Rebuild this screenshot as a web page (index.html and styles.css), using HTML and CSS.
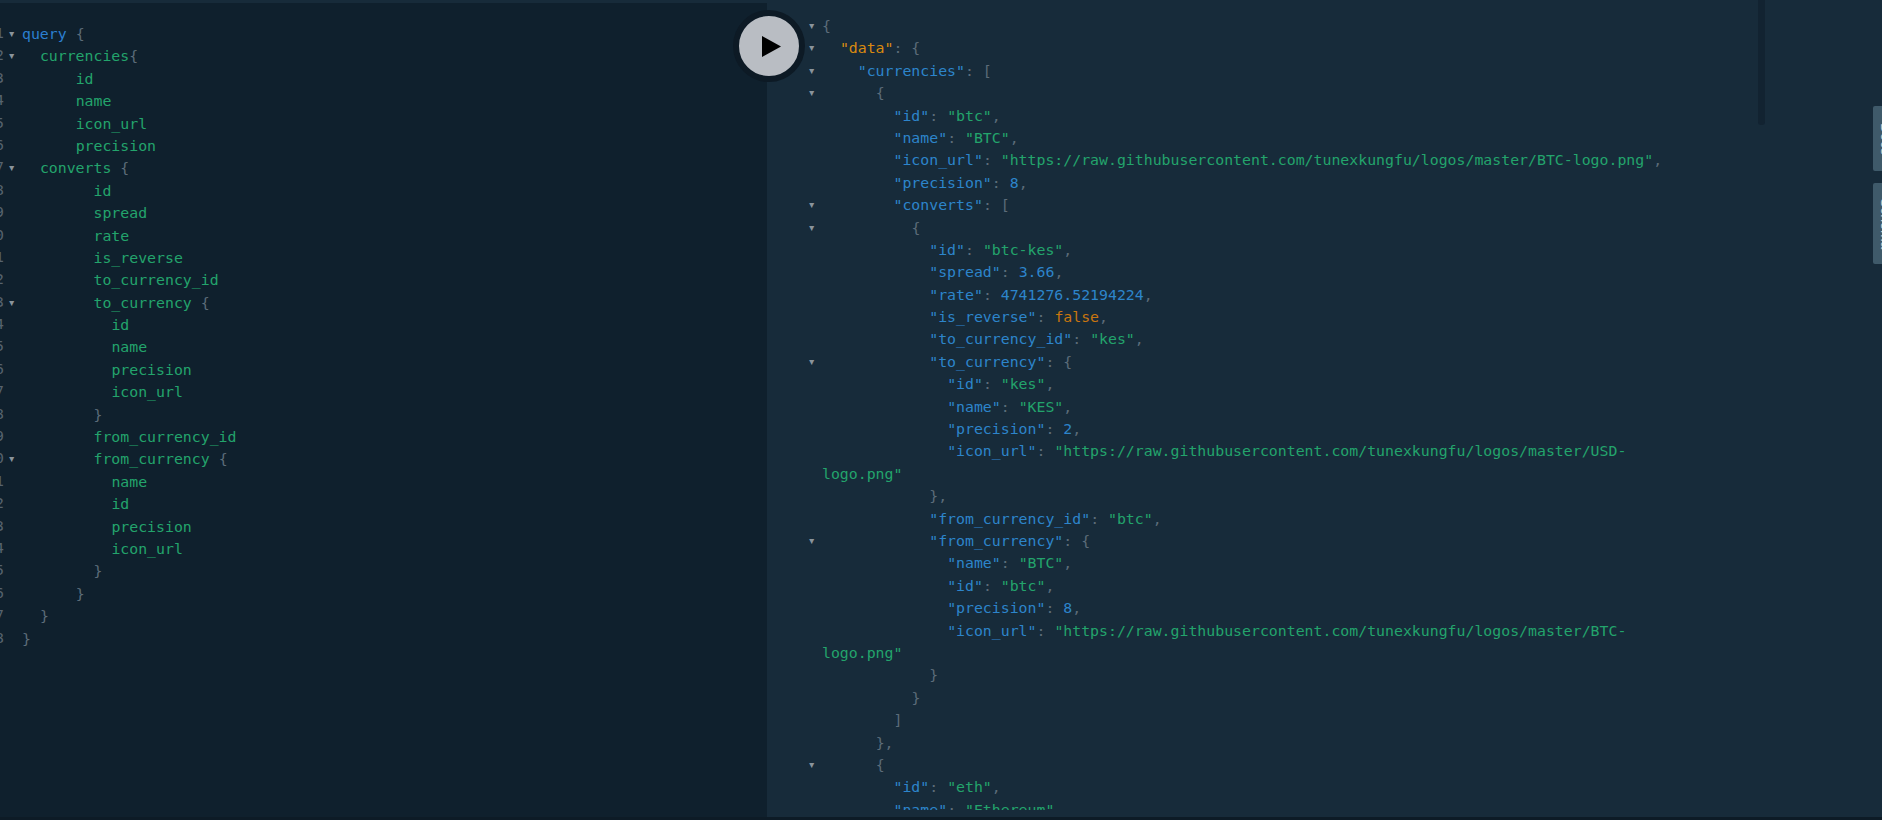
FILE: index.html
```html
<!DOCTYPE html>
<html lang="en">
<head>
<meta charset="utf-8">
<title>GraphiQL</title>
<link rel="stylesheet" href="styles.css">
</head>
<body>
<div class="app">
  <section class="editor">
    <div class="line"><span class="num">1</span><span class="fold">▾</span><code><span class="kw">query</span> <span class="p">{</span></code></div>
    <div class="line"><span class="num">2</span><span class="fold">▾</span><code>  <span class="g">currencies</span><span class="p">{</span></code></div>
    <div class="line"><span class="num">3</span><span class="fold"></span><code>      <span class="g">id</span></code></div>
    <div class="line"><span class="num">4</span><span class="fold"></span><code>      <span class="g">name</span></code></div>
    <div class="line"><span class="num">5</span><span class="fold"></span><code>      <span class="g">icon_url</span></code></div>
    <div class="line"><span class="num">6</span><span class="fold"></span><code>      <span class="g">precision</span></code></div>
    <div class="line"><span class="num">7</span><span class="fold">▾</span><code>  <span class="g">converts</span> <span class="p">{</span></code></div>
    <div class="line"><span class="num">8</span><span class="fold"></span><code>        <span class="g">id</span></code></div>
    <div class="line"><span class="num">9</span><span class="fold"></span><code>        <span class="g">spread</span></code></div>
    <div class="line"><span class="num">10</span><span class="fold"></span><code>        <span class="g">rate</span></code></div>
    <div class="line"><span class="num">11</span><span class="fold"></span><code>        <span class="g">is_reverse</span></code></div>
    <div class="line"><span class="num">12</span><span class="fold"></span><code>        <span class="g">to_currency_id</span></code></div>
    <div class="line"><span class="num">13</span><span class="fold">▾</span><code>        <span class="g">to_currency</span> <span class="p">{</span></code></div>
    <div class="line"><span class="num">14</span><span class="fold"></span><code>          <span class="g">id</span></code></div>
    <div class="line"><span class="num">15</span><span class="fold"></span><code>          <span class="g">name</span></code></div>
    <div class="line"><span class="num">16</span><span class="fold"></span><code>          <span class="g">precision</span></code></div>
    <div class="line"><span class="num">17</span><span class="fold"></span><code>          <span class="g">icon_url</span></code></div>
    <div class="line"><span class="num">18</span><span class="fold"></span><code>        <span class="p">}</span></code></div>
    <div class="line"><span class="num">19</span><span class="fold"></span><code>        <span class="g">from_currency_id</span></code></div>
    <div class="line"><span class="num">20</span><span class="fold">▾</span><code>        <span class="g">from_currency</span> <span class="p">{</span></code></div>
    <div class="line"><span class="num">21</span><span class="fold"></span><code>          <span class="g">name</span></code></div>
    <div class="line"><span class="num">22</span><span class="fold"></span><code>          <span class="g">id</span></code></div>
    <div class="line"><span class="num">23</span><span class="fold"></span><code>          <span class="g">precision</span></code></div>
    <div class="line"><span class="num">24</span><span class="fold"></span><code>          <span class="g">icon_url</span></code></div>
    <div class="line"><span class="num">25</span><span class="fold"></span><code>        <span class="p">}</span></code></div>
    <div class="line"><span class="num">26</span><span class="fold"></span><code>      <span class="p">}</span></code></div>
    <div class="line"><span class="num">27</span><span class="fold"></span><code>  <span class="p">}</span></code></div>
    <div class="line"><span class="num">28</span><span class="fold"></span><code><span class="p">}</span></code></div>
  </section>
  <section class="result">
    <div class="result-body">
    <div class="line"><span class="fold">▾</span><code><span class="p">{</span></code></div>
    <div class="line"><span class="fold">▾</span><code>  <span class="o">"data"</span><span class="p">: {</span></code></div>
    <div class="line"><span class="fold">▾</span><code>    <span class="b">"currencies"</span><span class="p">: [</span></code></div>
    <div class="line"><span class="fold">▾</span><code>      <span class="p">{</span></code></div>
    <div class="line"><span class="fold"></span><code>        <span class="b">"id"</span><span class="p">:</span> <span class="g">"btc"</span><span class="p">,</span></code></div>
    <div class="line"><span class="fold"></span><code>        <span class="b">"name"</span><span class="p">:</span> <span class="g">"BTC"</span><span class="p">,</span></code></div>
    <div class="line"><span class="fold"></span><code>        <span class="b">"icon_url"</span><span class="p">:</span> <span class="g">"https://raw.githubusercontent.com/tunexkungfu/logos/master/BTC-logo.png"</span><span class="p">,</span></code></div>
    <div class="line"><span class="fold"></span><code>        <span class="b">"precision"</span><span class="p">:</span> <span class="b">8</span><span class="p">,</span></code></div>
    <div class="line"><span class="fold">▾</span><code>        <span class="b">"converts"</span><span class="p">: [</span></code></div>
    <div class="line"><span class="fold">▾</span><code>          <span class="p">{</span></code></div>
    <div class="line"><span class="fold"></span><code>            <span class="b">"id"</span><span class="p">:</span> <span class="g">"btc-kes"</span><span class="p">,</span></code></div>
    <div class="line"><span class="fold"></span><code>            <span class="b">"spread"</span><span class="p">:</span> <span class="b">3.66</span><span class="p">,</span></code></div>
    <div class="line"><span class="fold"></span><code>            <span class="b">"rate"</span><span class="p">:</span> <span class="b">4741276.52194224</span><span class="p">,</span></code></div>
    <div class="line"><span class="fold"></span><code>            <span class="b">"is_reverse"</span><span class="p">:</span> <span class="o2">false</span><span class="p">,</span></code></div>
    <div class="line"><span class="fold"></span><code>            <span class="b">"to_currency_id"</span><span class="p">:</span> <span class="g">"kes"</span><span class="p">,</span></code></div>
    <div class="line"><span class="fold">▾</span><code>            <span class="b">"to_currency"</span><span class="p">: {</span></code></div>
    <div class="line"><span class="fold"></span><code>              <span class="b">"id"</span><span class="p">:</span> <span class="g">"kes"</span><span class="p">,</span></code></div>
    <div class="line"><span class="fold"></span><code>              <span class="b">"name"</span><span class="p">:</span> <span class="g">"KES"</span><span class="p">,</span></code></div>
    <div class="line"><span class="fold"></span><code>              <span class="b">"precision"</span><span class="p">:</span> <span class="b">2</span><span class="p">,</span></code></div>
    <div class="line"><span class="fold"></span><code>              <span class="b">"icon_url"</span><span class="p">:</span> <span class="g">"https://raw.githubusercontent.com/tunexkungfu/logos/master/USD-</span></code></div>
    <div class="line"><span class="fold"></span><code><span class="g">logo.png"</span></code></div>
    <div class="line"><span class="fold"></span><code>            <span class="p">},</span></code></div>
    <div class="line"><span class="fold"></span><code>            <span class="b">"from_currency_id"</span><span class="p">:</span> <span class="g">"btc"</span><span class="p">,</span></code></div>
    <div class="line"><span class="fold">▾</span><code>            <span class="b">"from_currency"</span><span class="p">: {</span></code></div>
    <div class="line"><span class="fold"></span><code>              <span class="b">"name"</span><span class="p">:</span> <span class="g">"BTC"</span><span class="p">,</span></code></div>
    <div class="line"><span class="fold"></span><code>              <span class="b">"id"</span><span class="p">:</span> <span class="g">"btc"</span><span class="p">,</span></code></div>
    <div class="line"><span class="fold"></span><code>              <span class="b">"precision"</span><span class="p">:</span> <span class="b">8</span><span class="p">,</span></code></div>
    <div class="line"><span class="fold"></span><code>              <span class="b">"icon_url"</span><span class="p">:</span> <span class="g">"https://raw.githubusercontent.com/tunexkungfu/logos/master/BTC-</span></code></div>
    <div class="line"><span class="fold"></span><code><span class="g">logo.png"</span></code></div>
    <div class="line"><span class="fold"></span><code>            <span class="p">}</span></code></div>
    <div class="line"><span class="fold"></span><code>          <span class="p">}</span></code></div>
    <div class="line"><span class="fold"></span><code>        <span class="p">]</span></code></div>
    <div class="line"><span class="fold"></span><code>      <span class="p">},</span></code></div>
    <div class="line"><span class="fold">▾</span><code>      <span class="p">{</span></code></div>
    <div class="line"><span class="fold"></span><code>        <span class="b">"id"</span><span class="p">:</span> <span class="g">"eth"</span><span class="p">,</span></code></div>
    <div class="line"><span class="fold"></span><code>        <span class="b">"name"</span><span class="p">:</span> <span class="g">"Ethereum"</span></code></div>
    </div>
  </section>
  <button class="play" aria-label="Run query">
    <svg width="19" height="21" viewBox="0 0 19 21"><path d="M0 0 L19 10.5 L0 21 Z" fill="#000"/></svg>
  </button>
  <div class="scrollbar"></div>
  <div class="tabs">
    <span class="tab tab-a">Docs</span>
    <span class="tab tab-b">Schema</span>
  </div>
</div>
</body>
</html>
```
FILE: styles.css
```css
* { box-sizing: border-box; }
html, body { margin: 0; height: 100%; overflow: hidden; background: #0f202d; }
.app {
  position: relative;
  width: 1882px;
  height: 820px;
  display: flex;
  border-top: 3px solid #172b3a;
  border-bottom: 3px solid #0d1b26;
  background: #0f202d;
  font: 14.85px/22.4px "DejaVu Sans Mono", monospace;
}
.editor { width: 767px; flex: none; padding-top: 20px; background: #0f202d; overflow: hidden; }
.result { flex: 1; min-width: 0; padding-left: 38px; background: #172b3a; }
.result-body { height: 807px; padding-top: 12px; overflow: hidden; }
.line { display: flex; height: 22.4px; white-space: pre; }
code { font: inherit; }
.num { width: 4px; height: 21px; margin-top: -1px; overflow: hidden; display: flex; justify-content: flex-end; color: #56636e; flex: none; }
.fold { width: 18px; flex: none; padding-right: 2.6px; font-size: 13px; color: #8a949c; text-align: center; }
.result .fold { width: 17px; padding-right: 3.5px; }
.kw { color: #2b7fd0; }
.g { color: #23a46c; }
.b { color: #2d85cb; }
.o { color: #d98a10; }
.o2 { color: #c9760f; }
.p { color: #5c6c79; }
.play {
  position: absolute;
  left: 733px;
  top: 7px;
  width: 72px;
  height: 72px;
  border-radius: 50%;
  border: 6px solid #0d1a25;
  background: #b9bdc3;
  display: flex;
  align-items: center;
  justify-content: center;
  padding: 0 0 0 4px;
}
.scrollbar { position: absolute; left: 1758px; top: -3px; width: 7px; height: 125px; background: #122331; border-radius: 0 0 3px 3px; }
.tabs { position: absolute; right: 0; top: 103px; width: 9px; display: flex; flex-direction: column; gap: 12px; overflow: hidden; }
.tab { display: block; flex: none; width: 24px; padding-left: 2px; background: #3f5a6a; border-radius: 2px 0 0 2px; color: #c3ccd2; font: 14px/22px "Liberation Sans", sans-serif; writing-mode: vertical-rl; text-align: center; }
.tab-a { height: 65px; }
.tab-b { height: 81px; }
```
